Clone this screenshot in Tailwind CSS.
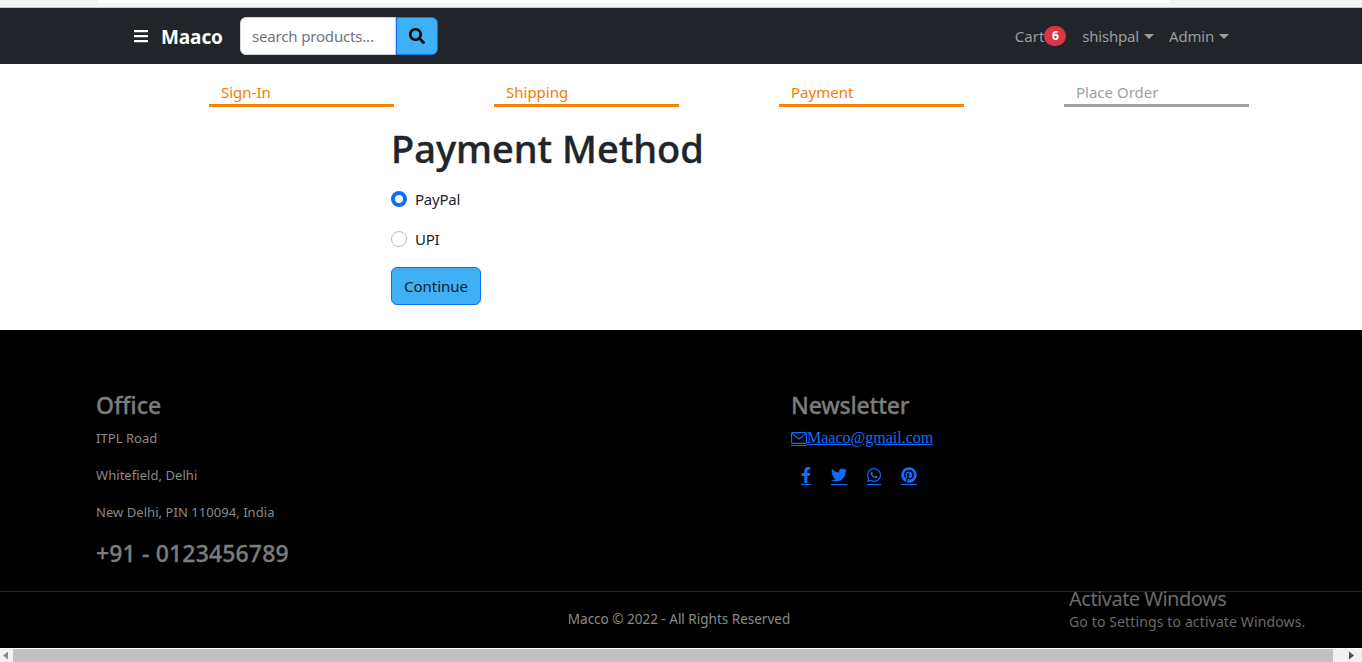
<!DOCTYPE html>
<html lang="en">
<head>
<meta charset="utf-8">
<title>Payment Method</title>
<script src="https://cdn.jsdelivr.net/npm/@tailwindcss/browser@4"></script>
</head>
<body class="h-[662px] w-[1362px] overflow-hidden flex flex-col relative font-['Noto_Sans','Open_Sans',sans-serif] bg-white">
  <div class="h-2 shrink-0 bg-[#f4f4f4] border-b border-[#c8c8c8]">
    <div class="ml-[97px] w-[1073px] h-[3px] bg-white rounded-b"></div>
  </div>
  <nav class="h-14 shrink-0 bg-[#212529] flex items-center pl-[134px] pr-[133px]">
    <svg class="w-[14px] h-4 fill-white" viewBox="0 0 448 512"><path d="M16 132h416c8.837 0 16-7.163 16-16V76c0-8.837-7.163-16-16-16H16C7.163 60 0 67.163 0 76v40c0 8.837 7.163 16 16 16zm0 160h416c8.837 0 16-7.163 16-16v-40c0-8.837-7.163-16-16-16H16c-8.837 0-16 7.163-16 16v40c0 8.837 7.163 16 16 16zm0 160h416c8.837 0 16-7.163 16-16v-40c0-8.837-7.163-16-16-16H16c-8.837 0-16 7.163-16 16v40c0 8.837 7.163 16 16 16z"/></svg>
    <span class="ml-[13px] w-[79px] pt-[2px] text-[19px] font-bold text-white tracking-[-0.1px]">Maaco</span>
    <div class="flex h-[38px]">
      <div class="w-[156px] bg-white border border-[#ced4da] rounded-l-md pl-[11px] flex items-center text-[15px] text-[#6c757d] tracking-[-0.17px]">search products...</div>
      <div class="w-[42px] bg-[#3fb0f3] border border-[#0d6efd] rounded-r-md flex items-center justify-center">
        <svg class="w-4 h-4 fill-black" viewBox="0 0 512 512"><path d="M505 442.7L405.3 343c-4.5-4.5-10.6-7-17-7H372c27.6-35.3 44-79.7 44-128C416 93.1 322.9 0 208 0S0 93.1 0 208s93.1 208 208 208c48.3 0 92.7-16.4 128-44v16.3c0 6.4 2.5 12.5 7 17l99.7 99.7c9.4 9.4 24.6 9.4 33.9 0l28.3-28.3c9.4-9.4 9.4-24.6.1-34zM208 336c-70.7 0-128-57.2-128-128 0-70.7 57.2-128 128-128 70.7 0 128 57.2 128 128 0 70.7-57.2 128-128 128z"/></svg>
      </div>
    </div>
    <div class="ml-auto flex items-center text-[15px] text-[#9b9d9e] tracking-[-0.2px]">
      <span class="tracking-normal">Cart</span>
      <span class="w-[22px] h-5 rounded-full bg-[#dc3545] text-white text-xs font-bold flex items-center justify-center">6</span>
      <span class="ml-4">shishpal</span>
      <span class="ml-[5px] w-0 h-0 border-x-[5px] border-x-transparent border-t-[5px] border-t-[#9b9d9e]"></span>
      <span class="ml-[15px]">Admin</span>
      <span class="ml-[5px] w-0 h-0 border-x-[5px] border-x-transparent border-t-[5px] border-t-[#9b9d9e]"></span>
    </div>
  </nav>
  <main class="h-[266px] shrink-0 text-[#212529]">
    <div class="flex gap-[100px] pl-[209px] text-[15px] text-[#f57c00]">
      <div class="w-[185px] h-[43px] pl-3 pt-[17px] border-b-[3px] border-[#f58200] leading-[22px]">Sign-In</div>
      <div class="w-[185px] h-[43px] pl-3 pt-[17px] border-b-[3px] border-[#f58200] leading-[22px]">Shipping</div>
      <div class="w-[185px] h-[43px] pl-3 pt-[17px] border-b-[3px] border-[#f58200] leading-[22px]">Payment</div>
      <div class="w-[185px] h-[43px] pl-3 pt-[17px] border-b-[3px] border-[#a0a0a0] leading-[22px] text-[#a0a0a0]">Place Order</div>
    </div>
    <div class="ml-[391px]">
      <h1 class="mt-[17px] text-[38px] leading-[48px] font-medium [-webkit-text-stroke:0.4px]">Payment Method</h1>
      <div class="mt-[19px] h-4 flex items-center text-[15px] tracking-[-0.25px]">
        <span class="w-4 h-4 rounded-full border-[4.5px] border-[#0d6efd] bg-white"></span>
        <span class="ml-2">PayPal</span>
      </div>
      <div class="mt-6 h-4 flex items-center text-[15px] tracking-[-0.25px]">
        <span class="w-4 h-4 rounded-full border border-[#bdbdbd] bg-white"></span>
        <span class="ml-2">UPI</span>
      </div>
      <button class="mt-5 w-[90px] h-[38px] bg-[#3fb0f3] border border-[#0d6efd] rounded-md text-[15px] text-[#10202c]">Continue</button>
    </div>
  </main>
  <footer class="flex-1 bg-black text-[#8a8a8a] flex flex-col">
    <div class="h-[262px] shrink-0 flex pl-[96px] pt-[59px] border-b border-[#2a2a2a]">
      <div class="w-[695px]">
        <h2 class="text-[23px] leading-8 font-medium text-[#7c7c7c] [-webkit-text-stroke:0.3px]">Office</h2>
        <p class="mt-[7px] text-[13px] leading-5 tracking-[0.05px]">ITPL Road</p>
        <p class="mt-[17px] text-[13px] leading-5 tracking-[0.05px]">Whitefield, Delhi</p>
        <p class="mt-[17px] text-[13px] leading-5 tracking-[0.05px]">New Delhi, PIN 110094, India</p>
        <p class="mt-[15px] text-[23px] leading-8 font-medium text-[#7c7c7c] tracking-[0.15px] [-webkit-text-stroke:0.3px]">+91 - 0123456789</p>
      </div>
      <div>
        <h2 class="text-[23px] leading-8 font-medium text-[#7c7c7c] tracking-[-0.2px] [-webkit-text-stroke:0.3px]">Newsletter</h2>
        <a class="mt-[7px] block w-fit text-[#0d6efd] underline font-['Liberation_Serif',serif] text-[16px] leading-5"><svg class="inline align-[-3px] w-4 h-[14px]" viewBox="0 0 16 14" fill="none" stroke="#0d6efd" stroke-width="1.2"><rect x=".6" y=".6" width="14.8" height="10.8" rx="1.2"/><path d="M.9 1.4 8 7l7.1-5.6"/><path d="M0 13.5h16" stroke-width="1"/></svg>Maaco@gmail.com</a>
        <div class="mt-[19px] ml-[10px] flex items-start">
          <a class="w-[10px] h-[18px] border-b border-[#0d6efd]"><svg class="w-[10px] h-4 fill-[#0d6efd]" viewBox="0 0 320 512"><path d="M279.14 288l14.22-92.66h-88.91v-60.13c0-25.35 12.42-50.06 52.24-50.06h40.42V6.26S260.43 0 225.36 0c-73.22 0-121.08 44.38-121.08 124.72v70.62H22.89V288h81.39v224h100.17V288z"/></svg></a>
          <a class="ml-5 w-4 h-[18px] border-b border-[#0d6efd]"><svg class="w-4 h-4 fill-[#0d6efd]" viewBox="0 0 512 512"><path d="M459.37 151.716c.325 4.548.325 9.097.325 13.645 0 138.72-105.583 298.558-298.558 298.558-59.452 0-114.68-17.219-161.137-47.106 8.447.974 16.568 1.299 25.34 1.299 49.055 0 94.213-16.568 130.274-44.832-46.132-.975-84.792-31.188-98.112-72.772 6.498.974 12.995 1.624 19.818 1.624 9.421 0 18.843-1.3 27.614-3.573-48.081-9.747-84.143-51.98-84.143-102.985v-1.299c13.969 7.797 30.214 12.67 47.431 13.319-28.264-18.843-46.781-51.005-46.781-87.391 0-19.492 5.197-37.36 14.294-52.954 51.655 63.675 129.3 105.258 216.365 109.807-1.624-7.797-2.599-15.918-2.599-24.04 0-57.828 46.782-104.934 104.934-104.934 30.213 0 57.502 12.67 76.67 33.137 23.715-4.548 46.456-13.32 66.599-25.34-7.798 24.366-24.366 44.833-46.132 57.827 21.117-2.273 41.584-8.122 60.426-16.243-14.292 20.791-32.161 39.308-52.628 54.253z"/></svg></a>
          <a class="ml-5 w-[14px] h-[18px] border-b border-[#0d6efd]"><svg class="w-[14px] h-4 fill-[#0d6efd]" viewBox="0 0 448 512"><path d="M380.9 97.1C339 55.1 283.2 32 223.9 32c-122.4 0-222 99.6-222 222 0 39.1 10.2 77.3 29.6 111L0 480l117.7-30.9c32.4 17.7 68.9 27 106.1 27h.1c122.3 0 224.1-99.6 224.1-222 0-59.3-25.2-115-67.1-157zm-157 341.6c-33.2 0-65.7-8.9-94-25.7l-6.7-4-69.8 18.3L72 359.2l-4.4-7c-18.5-29.4-28.2-63.3-28.2-98.2 0-101.7 82.8-184.5 184.6-184.5 49.3 0 95.6 19.2 130.4 54.1 34.8 34.9 56.2 81.2 56.1 130.5 0 101.8-84.9 184.6-186.6 184.6zm101.2-138.2c-5.5-2.8-32.8-16.2-37.9-18-5.1-1.9-8.8-2.8-12.5 2.8-3.7 5.6-14.3 18-17.6 21.8-3.2 3.7-6.5 4.2-12 1.4-32.6-16.3-54-29.1-75.5-66-5.7-9.8 5.7-9.1 16.3-30.3 1.8-3.7.9-6.9-.5-9.7-1.4-2.8-12.5-30.1-17.1-41.2-4.5-10.8-9.1-9.3-12.5-9.5-3.2-.2-6.9-.2-10.6-.2-3.7 0-9.7 1.4-14.8 6.9-5.1 5.6-19.4 19-19.4 46.3 0 27.3 19.9 53.7 22.6 57.4 2.8 3.7 39.1 59.7 94.8 83.8 35.2 15.2 49 16.5 66.6 13.9 10.7-1.6 32.8-13.4 37.4-26.4 4.6-13 4.6-24.1 3.2-26.4-1.3-2.5-5-3.9-10.5-6.6z"/></svg></a>
          <a class="ml-5 w-4 h-[18px] border-b border-[#0d6efd]"><svg class="w-4 h-4 fill-[#0d6efd]" viewBox="0 0 496 512"><path d="M496 256c0 137-111 248-248 248-25.6 0-50.2-3.9-73.4-11.1 10.1-16.5 25.2-43.5 30.8-65 3-11.6 15.4-59 15.4-59 8.1 15.4 31.7 28.5 56.8 28.5 74.8 0 128.7-68.8 128.7-154.3 0-81.9-66.9-143.2-152.9-143.2-107 0-163.9 71.8-163.9 150.1 0 36.4 19.4 81.7 50.3 96.1 4.7 2.2 7.2 1.2 8.3-3.3.8-3.4 5-20.3 6.9-28.1.6-2.5.3-4.7-1.7-7.1-10.1-12.5-18.3-35.3-18.3-56.6 0-54.7 41.4-107.6 112-107.6 60.9 0 103.6 41.5 103.6 100.9 0 67.1-33.9 113.6-78 113.6-24.3 0-42.6-20.1-36.7-44.8 7-29.5 20.5-61.3 20.5-82.6 0-19-10.2-34.9-31.4-34.9-24.9 0-44.9 25.7-44.9 60.2 0 22 7.4 36.8 7.4 36.8s-24.5 103.8-29 123.2c-5 21.4-3 51.6-.9 71.2C65.4 450.9 0 361.1 0 256 0 119 111 8 248 8s248 111 248 248z"/></svg></a>
        </div>
      </div>
    </div>
    <div class="flex-1 flex items-center justify-center pr-[4px] pb-[2px] text-[13.5px] text-[#8a8a8a]">Macco © 2022 - All Rights Reserved</div>
  </footer>
  <div class="h-[14px] shrink-0 bg-[#f1f1f1] border-t border-white flex items-center">
    <svg class="w-[13px] h-[13px] fill-[#8a8a8a]" viewBox="0 0 13 13"><path d="M8 2.5v8L3 6.5z"/></svg>
    <div class="ml-0 w-[1320px] h-[13px] bg-[#c1c1c1]"></div>
    <svg class="ml-[16px] w-[13px] h-[13px] fill-[#505050] -translate-x-[5px]" viewBox="0 0 13 13"><path d="M5 2.5v8l5-4z"/></svg>
  </div>
  <div class="absolute left-[1069px] top-[587px] text-[#6b6b6b]">
    <div class="text-[20px] leading-6 tracking-[-0.5px]">Activate Windows</div>
    <div class="text-[14px] leading-[21px] tracking-[0.13px]">Go to Settings to activate Windows.</div>
  </div>
</body>
</html>
